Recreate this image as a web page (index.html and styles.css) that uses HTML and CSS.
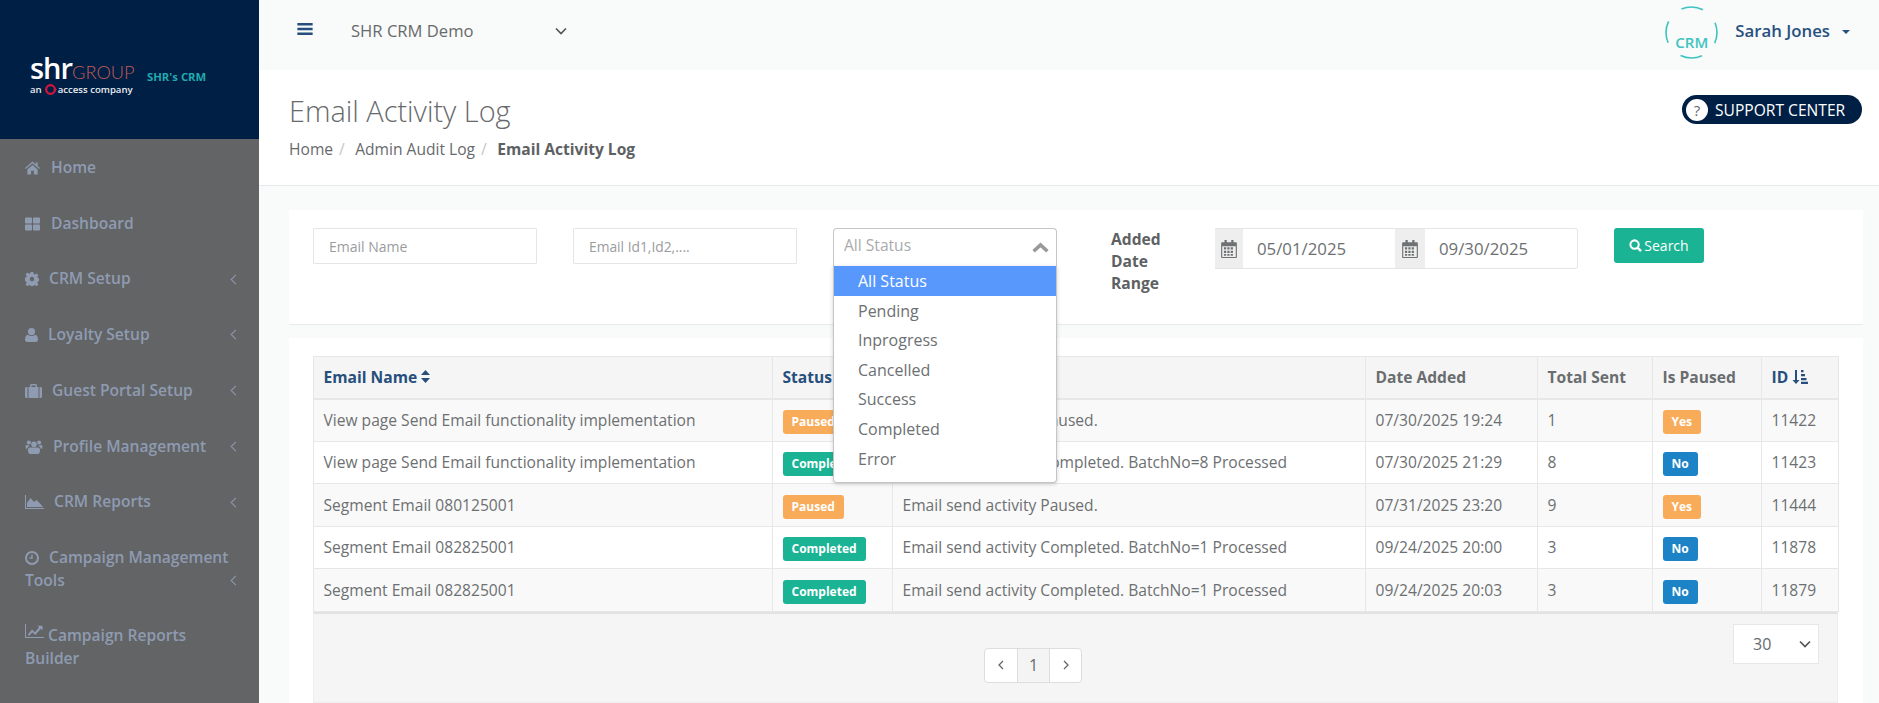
FILE: index.html
```html
<!DOCTYPE html>
<html lang="en">
<head>
<meta charset="utf-8">
<title>Email Activity Log</title>
<link rel="stylesheet" href="styles.css">
</head>
<body>
<div class="app">
  <aside class="sidebar">
    <div class="brand">
      <div class="brand-mark">
        <div class="brand-top"><span class="shr">shr</span><span class="group">GROUP</span></div>
        <div class="brand-sub"><span>an</span><svg class="ring" viewBox="0 0 12 12"><path d="M6 2a4 4 0 1 1 0 8 4 4 0 0 1-4-4 4 4 0 0 1 4-4z" fill="none" stroke="#d8153f" stroke-width="2"/><path d="M10 4.500 12 6l-2 1.500z" fill="#d8153f"/></svg><span>access company</span></div>
      </div>
      <span class="brand-crm">SHR's CRM</span>
    </div>
    <ul class="menu">
      <li><div class="label"><svg class="ic w15" viewBox="0 0 16 14"><path d="M8 0 0 7l.8 1L8 2l7.2 6 .8-1-2.500-2.200V1h-2v2.100zM2.500 8.500V14h4v-4h3v4h4V8.500L8 3.800z"/></svg><span class="t g11">Home</span></div></li>
      <li><div class="label"><svg class="ic w15" viewBox="0 0 15 13"><path d="M0 1a1 1 0 0 1 1-1h5a1 1 0 0 1 1 1v4a1 1 0 0 1-1 1H1a1 1 0 0 1-1-1zM8 1a1 1 0 0 1 1-1h5a1 1 0 0 1 1 1v4a1 1 0 0 1-1 1H9a1 1 0 0 1-1-1zM0 8a1 1 0 0 1 1-1h5a1 1 0 0 1 1 1v4a1 1 0 0 1-1 1H1a1 1 0 0 1-1-1zM8 8a1 1 0 0 1 1-1h5a1 1 0 0 1 1 1v4a1 1 0 0 1-1 1H9a1 1 0 0 1-1-1z"/></svg><span class="t g11">Dashboard</span></div></li>
      <li><div class="label"><svg class="ic w14" viewBox="0 0 14 14"><path fill-rule="evenodd" d="M5.700 0h2.600l.4 2 1.200.5 1.700-1.100 1.800 1.800-1.100 1.700.5 1.200 2 .4v2.600l-2 .4-.5 1.200 1.100 1.700-1.800 1.800-1.700-1.100-1.200.5-.4 2H5.700l-.4-2-1.200-.5-1.700 1.100-1.800-1.800 1.100-1.700-.5-1.200-2-.4V5.700l2-.4.5-1.200-1.100-1.700 1.800-1.800 1.700 1.100 1.200-.5zM7 4.800a2.200 2.200 0 1 0 0 4.400 2.200 2.200 0 0 0 0-4.400z"/></svg><span class="t g10">CRM Setup</span></div><i class="chev"></i></li>
      <li><div class="label"><svg class="ic w13" viewBox="0 0 13 14"><circle cx="6.500" cy="3.600" r="3.600"/><path d="M3 6.700C1 7.200 0 8.800 0 11.500 0 13 .9 14 2.300 14h8.400c1.400 0 2.300-1 2.300-2.500 0-2.700-1-4.300-3-4.800-.9.800-2.100 1.300-3.500 1.300S3.900 7.500 3 6.700z"/></svg><span class="t g10">Loyalty Setup</span></div><i class="chev"></i></li>
      <li><div class="label"><svg class="ic w17" viewBox="0 0 17 14"><path fill-rule="evenodd" d="M5 3V1.500C5 .7 5.700 0 6.500 0h4c.8 0 1.500.7 1.500 1.500V3h1.500v11h-10V3zm1.400 0h4.200V1.400H6.400zM2.500 3v11H1.500C.7 14 0 13.300 0 12.500v-8C0 3.700.7 3 1.500 3zm12 0h1c.8 0 1.500.7 1.500 1.500v8c0 .8-.7 1.500-1.500 1.500h-1z"/></svg><span class="t g10">Guest Portal Setup</span></div><i class="chev"></i></li>
      <li><div class="label"><svg class="ic w18" viewBox="0 0 18 15"><circle cx="9" cy="4.500" r="3"/><circle cx="3.500" cy="2.700" r="2.200"/><circle cx="14.500" cy="2.700" r="2.200"/><path d="M5 8h8c1.700 0 2.500 1.300 2.500 3.500 0 2-1 3.500-2.500 3.500H5c-1.500 0-2.500-1.500-2.500-3.500C2.500 9.300 3.300 8 5 8zM0 7c0-1 .7-1.800 1.500-1.800.5.500 1.200.8 2 .8.500 0 .7.100.9.400C3 7 1.900 8 1.700 9.500H1C.4 9.500 0 9 0 8zM18 7c0-1-.7-1.800-1.500-1.800-.5.500-1.200.8-2 .8-.5 0-.7.100-.9.400 1.400.6 2.500 1.600 2.700 3.100h.7c.6 0 1-.5 1-1.500z"/></svg><span class="t g10">Profile Management</span></div><i class="chev"></i></li>
      <li><div class="label"><svg class="ic w19" viewBox="0 0 19 14"><path d="M0 0h1v13h18v1H0zM2 12V8l3.500-5 3.500 4 2.500-2 4 4 2.500 3z"/></svg><span class="t g10">CRM Reports</span></div><i class="chev"></i></li>
      <li><div class="label"><svg class="ic w14" viewBox="0 0 14 14"><path fill-rule="evenodd" d="M7 0a7 7 0 1 1 0 14A7 7 0 0 1 7 0zm0 2a5 5 0 1 0 0 10A5 5 0 0 0 7 2zm-.7 1.500h1.400V7.700H4.500V6.300h1.800z"/></svg><span class="t g10">Campaign Management Tools</span></div><i class="chev"></i></li>
      <li><div class="label"><svg class="ic w19 up" viewBox="0 0 19 14"><path d="M0 0h1v13h18v1H0zM3 10.500l4-5 3 2.700 4-5-1.600-1.500H17.500V6.500L15.700 4.700 10.300 11 7.300 8.300 4 12z"/></svg><span class="t g4">Campaign Reports Builder</span></div></li>
    </ul>
  </aside>

  <main class="main">
    <header class="topbar">
      <div class="top-left">
        <svg class="burger" viewBox="0 0 14 11"><path d="M0 0h14v2.200H0zM0 4.400h14v2.200H0zM0 8.800h14V11H0z"/></svg>
        <div class="org"><span>SHR CRM Demo</span><svg class="chev-down" viewBox="0 0 12 8"><path d="M1 1.500l5 5 5-5" fill="none" stroke="#555" stroke-width="1.700"/></svg></div>
      </div>
      <div class="top-right">
        <div class="avatar"><svg class="avatar-ring" viewBox="0 0 53 53"><circle cx="26.500" cy="26.500" r="25.500"/></svg><span>CRM</span></div>
        <span class="user">Sarah Jones</span>
        <i class="caret"></i>
      </div>
    </header>

    <section class="page-head">
      <div>
        <h1>Email Activity Log</h1>
        <ol class="crumbs"><li>Home</li><li class="sep">/</li><li>Admin Audit Log</li><li class="sep">/</li><li class="cur">Email Activity Log</li></ol>
      </div>
      <a class="support"><span class="q">?</span>SUPPORT CENTER</a>
    </section>

    <section class="filters">
      <input class="field f1" placeholder="Email Name">
      <input class="field f2" placeholder="Email Id1,Id2,....">
      <div class="status-wrap">
        <div class="status-sel"><span>All Status</span><svg viewBox="0 0 16 10"><path d="M1.500 8.500 8 2.500l6.500 6" fill="none" stroke="#999" stroke-width="3.400"/></svg></div>
        <ul class="status-menu">
          <li class="on">All Status</li><li>Pending</li><li>Inprogress</li><li>Cancelled</li><li>Success</li><li>Completed</li><li>Error</li>
        </ul>
      </div>
      <div class="range-label">Added Date Range</div>
      <div class="range">
        <span class="addon"><svg viewBox="0 0 14 16"><path fill-rule="evenodd" d="M3 0h2v2h4V0h2v2h2c.6 0 1 .4 1 1v12c0 .6-.4 1-1 1H1c-.6 0-1-.4-1-1V3c0-.6.4-1 1-1h2zM1 5.500V15h12V5.500zm1.500 1h2v2h-2zm3 0h2v2h-2zm3 0h2v2h-2zm-6 3h2v2h-2zm3 0h2v2h-2zm3 0h2v2h-2zm-6 3h2v1.500h-2zm3 0h2v1.500h-2zm3 0h2v1.500h-2z"/></svg></span>
        <span class="date">05/01/2025</span>
        <span class="addon a2"><svg viewBox="0 0 14 16"><path fill-rule="evenodd" d="M3 0h2v2h4V0h2v2h2c.6 0 1 .4 1 1v12c0 .6-.4 1-1 1H1c-.6 0-1-.4-1-1V3c0-.6.4-1 1-1h2zM1 5.500V15h12V5.500zm1.500 1h2v2h-2zm3 0h2v2h-2zm3 0h2v2h-2zm-6 3h2v2h-2zm3 0h2v2h-2zm3 0h2v2h-2zm-6 3h2v1.500h-2zm3 0h2v1.500h-2zm3 0h2v1.500h-2z"/></svg></span>
        <span class="date d2">09/30/2025</span>
      </div>
      <button class="search"><svg viewBox="0 0 14 14"><circle cx="6" cy="6" r="4.500" fill="none" stroke="#fff" stroke-width="2.200"/><path d="M9.200 9.200 13 13" stroke="#fff" stroke-width="2.600"/></svg>Search</button>
    </section>

    <section class="results">
      <table class="grid">
        <colgroup><col class="c1"><col class="c2"><col class="c3"><col class="c4"><col class="c5"><col class="c6"><col class="c7"></colgroup>
        <thead>
          <tr>
            <th class="sort">Email Name <svg class="sorti" viewBox="0 0 9 13"><path d="M4.500 0 9 5H0zM0 8h9l-4.500 5z"/></svg></th>
            <th class="sort">Status</th>
            <th></th>
            <th>Date Added</th>
            <th>Total Sent</th>
            <th>Is Paused</th>
            <th class="sort">ID <svg class="sorta" viewBox="0 0 16 14"><path d="M3 0h2v10h2.500L4 14 .5 10H3zM9 0h2.500v2.200H9zM9 4h4v2.200H9zM9 8h5.500v2.200H9zM9 11.800h7V14H9z"/></svg></th>
          </tr>
        </thead>
        <tbody>
          <tr><td>View page Send Email functionality implementation</td><td><span class="badge warn">Paused</span></td><td>Email send activity Paused.</td><td>07/30/2025 19:24</td><td>1</td><td><span class="badge warn">Yes</span></td><td>11422</td></tr>
          <tr><td>View page Send Email functionality implementation</td><td><span class="badge ok">Completed</span></td><td>Email send activity Completed. BatchNo=8 Processed</td><td>07/30/2025 21:29</td><td>8</td><td><span class="badge info">No</span></td><td>11423</td></tr>
          <tr><td>Segment Email 080125001</td><td><span class="badge warn">Paused</span></td><td>Email send activity Paused.</td><td>07/31/2025 23:20</td><td>9</td><td><span class="badge warn">Yes</span></td><td>11444</td></tr>
          <tr><td>Segment Email 082825001</td><td><span class="badge ok">Completed</span></td><td>Email send activity Completed. BatchNo=1 Processed</td><td>09/24/2025 20:00</td><td>3</td><td><span class="badge info">No</span></td><td>11878</td></tr>
          <tr><td>Segment Email 082825001</td><td><span class="badge ok">Completed</span></td><td>Email send activity Completed. BatchNo=1 Processed</td><td>09/24/2025 20:03</td><td>3</td><td><span class="badge info">No</span></td><td>11879</td></tr>
        </tbody>
      </table>
      <div class="foot">
        <div class="pager"><span class="pg"><svg viewBox="0 0 6 10"><path d="M5 1 1 5l4 4" fill="none" stroke="#666" stroke-width="1.300"/></svg></span><span class="pg cur">1</span><span class="pg"><svg viewBox="0 0 6 10"><path d="M1 1l4 4-4 4" fill="none" stroke="#666" stroke-width="1.300"/></svg></span></div>
        <div class="size"><span>30</span><svg viewBox="0 0 12 8"><path d="M1 1.500l5 5 5-5" fill="none" stroke="#555" stroke-width="1.700"/></svg></div>
      </div>
    </section>
  </main>
</div>
</body>
</html>
```
FILE: styles.css
```css
* { box-sizing: border-box; }
html, body { margin: 0; height: 100%; overflow: hidden; }
body { font-family: "Open Sans", "Liberation Sans", sans-serif; color: #676a6c; font-size: 15.6px; background: #f9fafa; }
ul, ol { list-style: none; margin: 0; padding: 0; }
.app { display: flex; height: 703px; overflow: hidden; }

.sidebar { width: 259px; flex: none; background: #636466; }
.brand { height: 139px; background: #001f45; display: flex; align-items: flex-start; padding: 54px 0 0 30px; }
.brand-mark { width: 117px; }
.brand-top { display: flex; align-items: baseline; height: 28px; line-height: 28px; }
.shr { color: #fff; font-size: 29px; font-weight: 600; letter-spacing: -1px; line-height: 28px; }
.group { color: #c25c58; font-size: 18.2px; font-weight: 300; font-family: "Lato", "Open Sans", sans-serif; }
.brand-sub { display: flex; align-items: center; color: #e9edf2; font-size: 9.6px; font-weight: 600; line-height: 11px; height: 11px; margin-top: 2px; white-space: nowrap; }
.ring { width: 13px; height: 13px; margin: 0 1px 0 2px; flex: none; }
.brand-crm { color: #22a9ad; font-size: 11.3px; font-weight: 700; line-height: 16px; margin: 15px 0 0 0; white-space: nowrap; }

.menu li { display: flex; align-items: flex-end; padding: 16.75px 23px 16.75px 25px; }
.label { flex: 1; min-width: 0; color: #8e9bb1; font-size: 15.6px; font-weight: 600; line-height: 22.28px; }
.ic { height: 14px; fill: #8e9bb1; vertical-align: -2px; }
.ic.up { vertical-align: 3px; }
.w13 { width: 13px; } .w14 { width: 14px; } .w15 { width: 15px; } .w17 { width: 17px; } .w18 { width: 18px; } .w19 { width: 19px; }
.t { margin-left: 11px; }
.t.g10 { margin-left: 10px; }
.t.g4 { margin-left: 4px; }
.chev { flex: none; width: 6px; height: 22px; margin-left: -4px; }
.chev::before { content: ""; display: block; width: 6px; height: 6px; border-left: 1.300px solid #8e9bb1; border-bottom: 1.300px solid #8e9bb1; transform: rotate(45deg); margin: 8px 0 0 2px; }

.main { flex: 1; min-width: 0; display: flex; flex-direction: column; }
.topbar { height: 70px; flex: none; display: flex; justify-content: space-between; padding: 0 29px 0 38px; background: #f9fafa; }
.top-left { display: flex; align-items: flex-start; }
.burger { width: 16px; height: 12px; fill: #264f7c; margin-top: 23px; }
.org { display: flex; align-items: center; width: 225px; justify-content: space-between; margin: 20px 0 0 38px; font-size: 16.6px; line-height: 22px; color: #676a6c; }
.org svg { width: 12px; height: 8px; margin-right: 9px; }
.top-right { display: flex; align-items: flex-start; }
.avatar { width: 53px; height: 53px; margin-top: 6px; position: relative; display: flex; align-items: flex-end; justify-content: center; padding-bottom: 8px; }
.avatar-ring { position: absolute; inset: 0; width: 53px; height: 53px; fill: none; stroke: #3cc4c0; stroke-width: 1.600; stroke-dasharray: 22 18.050; stroke-dashoffset: 11; }
.avatar span { color: #3cc4c0; font-size: 15px; font-weight: 600; line-height: 18px; }
.user { color: #27507f; font-weight: 600; font-size: 16.8px; line-height: 22px; margin: 20px 0 0 17px; }
.caret { width: 0; height: 0; border: 4px solid transparent; border-top-color: #27507f; border-bottom: 0; margin: 30px 0 0 12px; }

.page-head { height: 116px; flex: none; background: #fff; border-bottom: 1px solid #e7eaec; display: flex; justify-content: space-between; align-items: flex-start; padding: 0 17px 0 30px; }
h1 { margin: 21px 0 0; font-size: 28.9px; line-height: 40px; font-weight: 300; color: #676a6c; }
.crumbs { display: flex; margin-top: 7px; font-size: 15.6px; line-height: 22px; }
.crumbs .sep { color: #c4c6c8; margin: 0 10.4px 0 6px; }
.crumbs .cur { font-weight: 700; color: #5e6163; }
.support { margin-top: 25px; height: 29px; width: 180px; background: #001f45; border-radius: 15px; color: #fff; display: flex; align-items: center; padding-left: 4px; font-size: 15.6px; white-space: nowrap; }
.q { width: 22px; height: 22px; border-radius: 50%; background: #fff; color: #676a6c; font-size: 15px; display: flex; align-items: center; justify-content: center; margin-right: 7px; flex: none; }

.filters { flex: none; margin: 24px 16px 0 30px; height: 115px; background: #fff; border-bottom: 1px solid #e7eaec; display: flex; align-items: flex-start; padding: 18px 0 0 24px; }
.field { height: 36px; border: 1px solid #e5e6e7; padding: 0 15px; font: 400 14px "Open Sans", sans-serif; outline: 0; background: #fff; border-radius: 1px; }
.field::placeholder { color: #9a9c9e; opacity: 1; }
.f1 { width: 224px; }
.f2 { width: 224px; margin-left: 36px; font-size: 13.8px; }
.status-wrap { position: relative; margin-left: 36px; flex: none; width: 224px; }
.status-sel { height: 38px; border: 1px solid #c5c5c5; border-radius: 4px 4px 0 0; display: flex; justify-content: space-between; align-items: flex-start; padding: 4px 7px 0 10px; color: #a9abad; font-size: 15.6px; line-height: 24px; border-bottom: 0; background: #fff; }
.status-sel svg { width: 17px; height: 11px; margin-top: 9px; }
.status-menu { position: absolute; left: 0; right: 0; top: 38px; z-index: 5; background: #fff; border: 1px solid #c5c5c5; border-top: 0; border-radius: 0 0 4px 4px; padding-bottom: 9px; box-shadow: 0 1px 4px rgba(0,0,0,.18); }
.status-menu li { height: 29.600px; line-height: 30.600px; padding-left: 24px; font-size: 16px; color: #6d7072; }
.status-menu li.on { background: #5897fb; color: #fff; }
.range-label { width: 72px; margin-left: 54px; font-size: 15.600px; line-height: 22px; font-weight: 700; color: #5e6163; }
.range { display: flex; height: 41px; margin-left: 32px; width: 363px; border: 1px solid #e5e6e7; border-left: 0; border-radius: 0 3px 3px 0; align-items: stretch; flex: none; }
.addon { width: 28px; background: #eee; display: flex; align-items: center; justify-content: center; flex: none; }
.addon svg { width: 16px; height: 18px; fill: #6f7274; }
.a2 { width: 30px; }
.date { width: 152px; padding-left: 14px; font-size: 16.8px; line-height: 39px; color: #6d7072; }
.d2 { flex: 1; padding-left: 14px; }
.search { width: 90px; height: 35px; margin-left: 36px; border: 0; background: #1ab394; color: #fff; border-radius: 3px; font: 400 14px "Open Sans", sans-serif; display: flex; align-items: center; justify-content: center; gap: 2px; padding: 0 0 1px; }
.search svg { width: 13px; height: 13px; }

.results { flex: 1; margin: 13px 16px 0 30px; background: #fff; padding: 18px 25px 0 24px; display: flex; flex-direction: column; min-height: 0; }
.grid { width: 1525px; border-collapse: collapse; table-layout: fixed; border: 1px solid #e7e7e7; }
.c1 { width: 459px; } .c2 { width: 120px; } .c3 { width: 473px; } .c4 { width: 172px; } .c5 { width: 115px; } .c6 { width: 109px; } .c7 { width: 77px; }
.grid th { height: 42px; background: #f5f5f6; border: 1px solid #e7e7e7; border-bottom-width: 2px; text-align: left; font-weight: 700; font-size: 15.600px; color: #6a6d6f; padding: 0 10px 0 9.500px; white-space: nowrap; }
.grid th.sort { color: #264f7c; }
.grid td { height: 42.500px; border: 1px solid #e7e7e7; padding: 0 10px 0 9.500px; white-space: nowrap; overflow: visible; color: #6d7072; font-size: 15.600px; }
.grid tbody tr:nth-child(odd) td { background: #f9f9f9; }
.sorti { width: 9px; height: 13px; fill: #264f7c; }
.sorta { width: 16px; height: 14px; fill: #264f7c; vertical-align: -1px; }
.badge { display: inline-block; color: #fff; font-size: 12px; font-weight: 700; line-height: 24px; height: 24px; padding: 0 9px; border-radius: 3px; vertical-align: -3px; }
.warn { background: #f8ac59; }
.ok { background: #1ab394; }
.info { background: #1c84c6; }

.foot { flex: 1; background: #f5f5f5; border: 1px solid #eee; border-top: 2px solid #e2e2e2; width: 1525px; display: flex; align-items: flex-start; padding: 34px 18px 0 0; }
.pager { display: flex; height: 35px; margin-left: 670px; border: 1px solid #ddd; border-radius: 4px; background: #fff; }
.pg { width: 32px; display: flex; align-items: center; justify-content: center; font-size: 16px; border-left: 1px solid #ddd; }
.pg:first-child { border-left: 0; }
.pg.cur { background: #f4f4f4; }
.pg svg { width: 6px; height: 10px; }
.size { width: 86px; height: 40px; margin: -24px 0 0 auto; background: #fff; border: 1px solid #e7e7e7; display: flex; align-items: center; justify-content: space-between; padding: 0 7px 0 19px; font-size: 16px; }
.size svg { width: 12px; height: 8px; }
```
